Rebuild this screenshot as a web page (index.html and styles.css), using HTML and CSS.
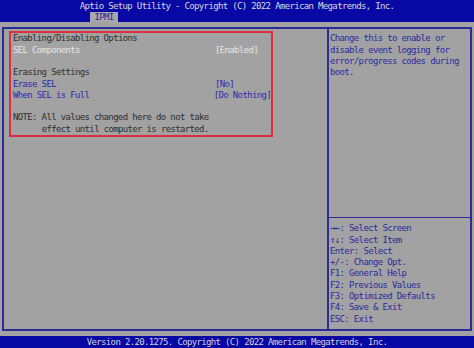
FILE: index.html
```html
<!DOCTYPE html>
<html>
<head>
<meta charset="utf-8">
<link rel="stylesheet" href="styles.css">
</head>
<body>
<div class="screen">
  <header class="top">
    <div class="title">Aptio Setup Utility - Copyright (C) 2022 American Megatrends, Inc.</div>
    <div class="tabs"><span class="tab">IPMI</span></div>
  </header>
  <main class="frame">
    <section class="left">
      <div class="box">
        <div class="row dark">Enabling/Disabling Options</div>
        <div class="row light"><span class="label">SEL Components</span><span class="val">[Enabled]</span></div>
        <div class="row"></div>
        <div class="row dark">Erasing Settings</div>
        <div class="row blue"><span class="label">Erase SEL</span><span class="val">[No]</span></div>
        <div class="row blue"><span class="label">When SEL is Full</span><span class="val">[Do Nothing]</span></div>
        <div class="row"></div>
        <div class="row dark">NOTE: All values changed here do not take</div>
        <div class="row dark indent">effect until computer is restarted.</div>
      </div>
    </section>
    <aside class="right">
      <div class="help">
        <div class="row">Change this to enable or</div>
        <div class="row">disable event logging for</div>
        <div class="row">error/progress codes during</div>
        <div class="row">boot.</div>
      </div>
      <div class="keys">
        <div class="row"><span class="arrows">→←</span>: Select Screen</div>
        <div class="row"><span class="arrows">↑↓</span>: Select Item</div>
        <div class="row">Enter: Select</div>
        <div class="row">+/-: Change Opt.</div>
        <div class="row">F1: General Help</div>
        <div class="row">F2: Previous Values</div>
        <div class="row">F3: Optimized Defaults</div>
        <div class="row">F4: Save &amp; Exit</div>
        <div class="row">ESC: Exit</div>
      </div>
    </aside>
  </main>
  <footer class="bottom">Version 2.20.1275. Copyright (C) 2022 American Megatrends, Inc.</footer>
</div>
</body>
</html>
```

FILE: styles.css
```css
html, body {
  margin: 0;
  padding: 0;
  background: #a2a2a2;
}
.screen {
  width: 474px;
  height: 348px;
  display: flex;
  flex-direction: column;
  font-family: "DejaVu Sans Mono", "Liberation Mono", monospace;
  font-size: 9px;
  letter-spacing: -0.65px;
  overflow: hidden;
}
.top {
  height: 22px;
  background: #0808a4;
  display: flex;
  flex-direction: column;
}
.title {
  height: 12px;
  line-height: 12px;
  text-align: center;
  color: #d8d8e0;
}
.tabs {
  height: 10px;
  display: flex;
  padding-left: 90px;
}
.tab {
  width: 28px;
  height: 10px;
  line-height: 10px;
  background: #a8a8a8;
  color: #2a2a9a;
  text-align: center;
}
.frame {
  margin: 5px 2px 0 2px;
  height: 300px;
  border: 2px solid #2c2c96;
  display: flex;
}
.left {
  width: 325px;
  border-right: 2px solid #2c2c96;
  padding: 2px 0 0 5px;
  box-sizing: border-box;
}
.box {
  width: 264px;
  height: 106px;
  box-sizing: border-box;
  border: 2px solid #dc2e3c;
  padding: 0.4px 0 0 2px;
}
.row {
  height: 11.3px;
  line-height: 11.3px;
  white-space: pre;
  display: flex;
}
.label {
  width: 202px;
}
.dark { color: #2e2e2e; }
.light { color: #e6e6e6; }
.blue { color: #2c2cb2; }
.indent { padding-left: 28.7px; }
.right {
  flex: 1;
  display: flex;
  flex-direction: column;
  color: #2a2aa0;
}
.help {
  height: 189px;
  box-sizing: border-box;
  padding: 4.4px 0 0 1px;
  border-bottom: 1px solid #2c2c96;
}
.keys {
  padding: 5.3px 0 0 1px;
}
.arrows {
  color: #2a2aa0;
}
.bottom {
  margin-top: 5px;
  height: 12px;
  line-height: 13px;
  background: #0808a4;
  color: #d0d0dc;
  text-align: center;
}
```
